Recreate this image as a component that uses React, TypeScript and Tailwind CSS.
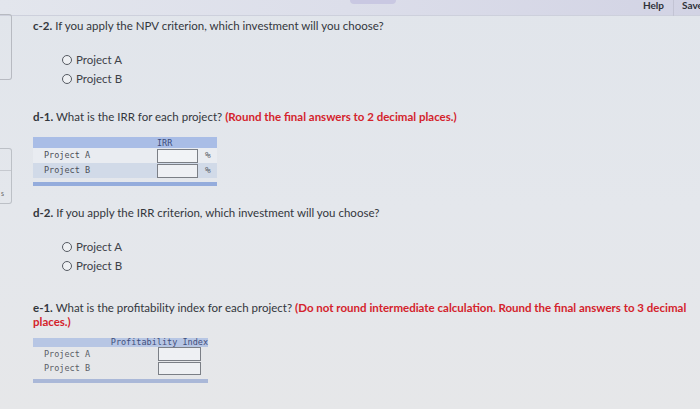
import React from "react";

const Radio = ({ label }: { label: string }) => (
  <div className="flex items-center h-[19px] pl-[29px]">
    <span className="w-[10px] h-[10px] rounded-full border border-[#555a62] bg-[#eef0f3]" />
    <span className="ml-[4px] text-[11.5px] text-[#3d4148] font-['Lato']">{label}</span>
  </div>
);

export default function App() {
  return (
    <div className="w-[700px] h-[409px] overflow-hidden bg-gradient-to-b from-[#e1e5eb] via-[#e4e7ec] to-[#e6e7e9] font-['Lato'] text-[#33363c]">
      {/* top bar */}
      <div className="h-[16px] flex justify-end items-start bg-gradient-to-r from-[#e3e6ed] via-[#dcdeea] to-[#d2d3e4] border-b border-[#cdd0dc]">
        <div className="flex-1 flex justify-start pl-[350px]">
          <div className="w-[46px] h-[4px] rounded-b-[4px] bg-[#c9c8e2]" />
        </div>
        <span className="text-[10px] leading-[10px] font-bold text-[#2f3138]">Help</span>
        <span className="w-px h-[16px] bg-[#c3c4d4] ml-[9px] mr-[8px]" />
        <span className="text-[10px] leading-[10px] font-bold text-[#2f3138] w-[18px] overflow-hidden whitespace-nowrap">Save</span>
      </div>

      <div className="flex">
        {/* left partial column */}
        <div className="w-[12px] flex flex-col">
          <div className="h-[66px] -mt-[2px] border border-l-0 border-[#b7bac1] rounded-r-[3px]" />
          <div className="h-[56px] mt-[68px] border border-l-0 border-[#bcc0c6] rounded-r-[3px] flex flex-col">
            <div className="h-[22px] border-b border-[#c6c9cf]" />
            <div className="flex-1 flex items-end pb-[6px]">
              <span className="text-[7px] leading-[7px] text-[#666] pl-[1px]">s</span>
            </div>
          </div>
        </div>

        {/* main */}
        <div className="flex-1 pl-[21px] flex flex-col">
          <p className="mt-[3px] text-[11.5px] leading-[14px] text-[#33363c]">
            <span className="font-bold">c-2.</span> If you apply the NPV criterion, which investment will you choose?
          </p>
          <div className="mt-[17px]">
            <Radio label="Project A" />
            <Radio label="Project B" />
          </div>

          <p className="mt-[22px] text-[11.5px] leading-[14px]">
            <span className="font-bold">d-1.</span> What is the IRR for each project?{" "}
            <span className="font-bold text-[#d4232c]">(Round the final answers to 2 decimal places.)</span>
          </p>

          {/* IRR table */}
          <div className="mt-[13px] w-[184px] font-['DejaVu_Sans_Mono'] text-[8.5px]">
            <div className="h-[11px] bg-[#a9bde6] flex items-end">
              <span className="ml-[124px] leading-[10px] text-[#3c4c7c]">IRR</span>
            </div>
            <div className="h-[15px] flex items-center bg-[#e9ecf1]">
              <span className="w-[124px] pl-[11px] text-[#4c5058]">Project A</span>
              <div className="w-[41px] h-[14px] border border-[#7b7f86] bg-[#f1f3f6]" />
              <span className="ml-[7px] text-[9.5px] text-[#5b6069]">%</span>
            </div>
            <div className="h-[15px] flex items-center bg-[#d1dae8]">
              <span className="w-[124px] pl-[11px] text-[#4c5058]">Project B</span>
              <div className="w-[41px] h-[14px] border border-[#7b7f86] bg-[#eef0f4]" />
              <span className="ml-[7px] text-[9.5px] text-[#5b6069]">%</span>
            </div>
            <div className="h-[4px] mt-[4px] bg-[#94acdc]" />
          </div>

          <p className="mt-[20px] text-[11.5px] leading-[14px]">
            <span className="font-bold">d-2.</span> If you apply the IRR criterion, which investment will you choose?
          </p>
          <div className="mt-[17px]">
            <Radio label="Project A" />
            <Radio label="Project B" />
          </div>

          <div className="mt-[26px] text-[11.5px] leading-[14px]">
            <p className="whitespace-nowrap">
              <span className="font-bold">e-1.</span> What is the profitability index for each project?{" "}
              <span className="font-bold text-[#d4232c]">
                (Do not round intermediate calculation. Round the final answers to 3 decimal
              </span>
            </p>
            <p className="font-bold text-[#d4232c]">places.)</p>
          </div>

          {/* PI table */}
          <div className="mt-[9px] w-[175px] font-['DejaVu_Sans_Mono'] text-[8.5px]">
            <div className="h-[9px] bg-[#b7c6e4] flex items-end justify-end">
              <span className="leading-[9px] text-[#3f4f7c] whitespace-nowrap">Profitability Index</span>
            </div>
            <div className="h-[14px] flex items-center">
              <span className="w-[125px] pl-[11px] text-[#5a5e66]">Project A</span>
              <div className="w-[43px] h-[14px] border border-[#7b7f86] bg-[#eef0f3]" />
            </div>
            <div className="h-[14px] flex items-center">
              <span className="w-[125px] pl-[11px] text-[#5a5e66]">Project B</span>
              <div className="w-[43px] h-[13px] border border-[#7b7f86] bg-[#eef0f3]" />
            </div>
            <div className="h-[4px] mt-[4px] bg-[#aab8d8]" />
          </div>
        </div>
      </div>
    </div>
  );
}
